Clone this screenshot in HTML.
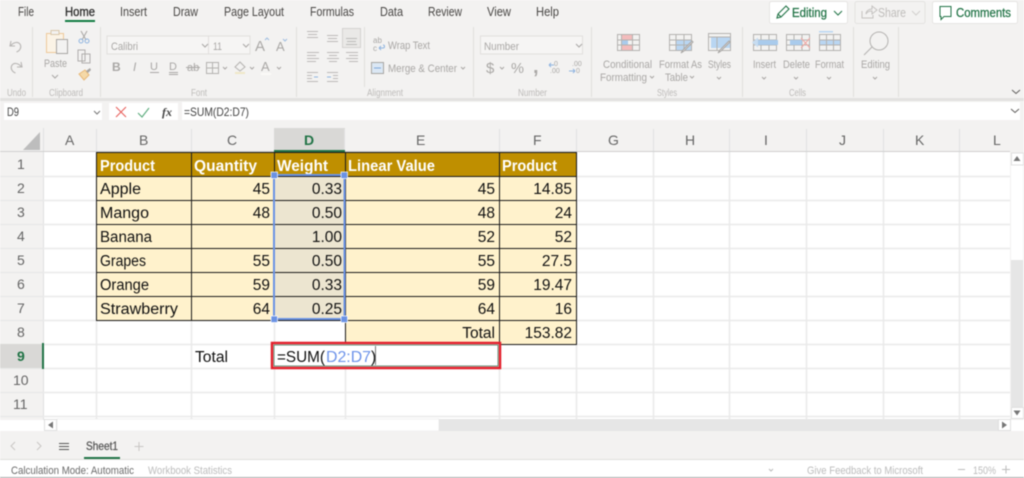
<!DOCTYPE html>
<html><head><meta charset="utf-8"><title>Excel</title>
<style>
html,body{margin:0;padding:0;background:#fff;width:1024px;height:478px;overflow:hidden}
svg{display:block;filter:blur(.45px)}
text{font-family:"Liberation Sans",sans-serif}
.tab{font-size:12.5px;fill:#484644}
.rb{font-size:11px;fill:#a9a7a5}
.gl{font-size:10px;fill:#bdbbb9}
.hd{font-size:14px;fill:#666}
.c{font-size:15.5px;fill:#111}
.w{font-size:15.5px;fill:#fff;font-weight:bold}
.gr{stroke:#eaeaea;stroke-width:1.5;fill:none}
.bk{stroke:#1c1c1c;stroke-width:1;fill:none}
.ic{stroke:#b4b2b0;stroke-width:1;fill:none}
.al{stroke:#bcbab8;stroke-width:1;fill:none}
.sep{stroke:#e1dfdd;stroke-width:1}
.chv{stroke:#a9a7a5;stroke-width:1;fill:none}
</style></head><body>
<svg width="1024" height="478" viewBox="0 0 1024 478" xmlns="http://www.w3.org/2000/svg" shape-rendering="geometricPrecision">
<rect width="1024" height="478" fill="#fff"/>
<rect width="1024" height="128" fill="#f3f2f1"/>
<rect y="98" width="1024" height="3" fill="#e3e2e0"/>

<!-- tabs -->
<text class="tab" x="18" y="16" textLength="16" lengthAdjust="spacingAndGlyphs">File</text>
<text class="tab" x="65" y="16" textLength="30" lengthAdjust="spacingAndGlyphs" style="fill:#2b2b2b;stroke:#2b2b2b;stroke-width:.3">Home</text>
<rect x="65" y="20" width="30" height="2" fill="#107c41"/>
<text class="tab" x="120" y="16" textLength="27" lengthAdjust="spacingAndGlyphs">Insert</text>
<text class="tab" x="173" y="16" textLength="25" lengthAdjust="spacingAndGlyphs">Draw</text>
<text class="tab" x="224" y="16" textLength="60" lengthAdjust="spacingAndGlyphs">Page Layout</text>
<text class="tab" x="310" y="16" textLength="44" lengthAdjust="spacingAndGlyphs">Formulas</text>
<text class="tab" x="380" y="16" textLength="23" lengthAdjust="spacingAndGlyphs">Data</text>
<text class="tab" x="428" y="16" textLength="34" lengthAdjust="spacingAndGlyphs">Review</text>
<text class="tab" x="487" y="16" textLength="24" lengthAdjust="spacingAndGlyphs">View</text>
<text class="tab" x="536" y="16" textLength="23" lengthAdjust="spacingAndGlyphs">Help</text>

<!-- top right buttons -->
<rect x="769.5" y="1.5" width="78" height="22" rx="2" fill="#fff" stroke="#e6e5e3"/>
<path d="M777 18l1-4 8-8 3 3-8 8zM778 14l3 3" fill="none" stroke="#217346" stroke-width="1.1"/>
<text x="792" y="17" font-size="12.5" fill="#217346" stroke="#217346" stroke-width=".25" textLength="35" lengthAdjust="spacingAndGlyphs">Editing</text>
<path d="M834 11l4 4 4-4" fill="none" stroke="#217346"/>
<rect x="855" y="1.5" width="70" height="22" rx="2" fill="#f3f2f1" stroke="#e3e2e0"/>
<path d="M862 11v7h11v-3M866 14c0-3 3-5 6-5V6l5 4-5 4v-3c-3 0-5 1-6 3z" fill="none" stroke="#c4c2c0"/>
<text x="878" y="17" font-size="12.5" fill="#bfbdbb" textLength="28" lengthAdjust="spacingAndGlyphs">Share</text>
<path d="M912 11l4 4 4-4" fill="none" stroke="#d2d0ce"/>
<rect x="932.5" y="1.5" width="85" height="22" rx="2" fill="#fff" stroke="#e6e5e3"/>
<path d="M940 6.500h11v10h-7l-3 3v-3h-1z" fill="none" stroke="#217346"/>
<text x="956" y="17" font-size="12.5" fill="#217346" stroke="#217346" stroke-width=".25" textLength="55" lengthAdjust="spacingAndGlyphs">Comments</text>

<!-- group separators -->
<path class="sep" d="M32.500 27v70M100.500 27v70M296.500 27v70M364.500 27v60M473.500 27v70M591.500 27v70M742.500 27v70M853.500 27v70M898.500 27v70"/>

<!-- undo/redo -->
<path d="M11 41l-1 5 5 0M10.500 46c3-4 8-5 10-1 1 3-1 6-4 7" fill="none" stroke="#b8b6b4" stroke-width="1.100"/>
<path d="M21 62l1 5-5 0M21.500 67c-3-4-8-5-10-1-1 3 1 6 4 7" fill="none" stroke="#b8b6b4" stroke-width="1.100"/>
<text class="gl" x="7" y="96" textLength="19" lengthAdjust="spacingAndGlyphs">Undo</text>

<!-- clipboard -->
<rect x="46.500" y="33.500" width="17" height="19" fill="#fbf3e6" stroke="#eec99a"/>
<rect x="51" y="30.500" width="8" height="4" fill="#f3f2f1" stroke="#d9c7ac"/>
<rect x="56.500" y="39.500" width="11" height="14" fill="#f3f2f1" stroke="#a8a6a4"/>
<text class="rb" x="44" y="67" textLength="23" lengthAdjust="spacingAndGlyphs">Paste</text>
<path class="chv" d="M52 75l3 3 3-3"/>
<path d="M81 31l5 9M87 31l-5 9" stroke="#a8a6a4" fill="none"/>
<circle cx="81" cy="41" r="2" fill="none" stroke="#8fb4e0"/><circle cx="87" cy="41" r="2" fill="none" stroke="#8fb4e0"/>
<path d="M78 50h7v11h-7zM82 54h8v9h-8z" fill="#f3f2f1" stroke="#b0aeac"/>
<path d="M79 74l6-4 4 5-5 5z" fill="#f5d9a8" stroke="#e8b878"/><path d="M86 71l4-3 1 2-3 3z" fill="#a8a6a4"/>
<text class="gl" x="49" y="96" textLength="34" lengthAdjust="spacingAndGlyphs">Clipboard</text>

<!-- font -->
<rect x="107" y="36" width="143" height="18" fill="#f6f5f4" stroke="#e1dfdd"/>
<path class="sep" d="M208.500 36v18"/>
<text class="rb" x="111" y="50" textLength="27" lengthAdjust="spacingAndGlyphs">Calibri</text>
<path class="chv" d="M202 44l3 3 3-3M243 44l3 3 3-3"/>
<text class="rb" x="213" y="50" textLength="9" lengthAdjust="spacingAndGlyphs">11</text>
<text x="255" y="51" font-size="15" fill="#aaa8a6">A</text><path d="M265 40l2-2 2 2" fill="none" stroke="#9fbde0"/>
<text x="276" y="51" font-size="13" fill="#aaa8a6">A</text><path d="M283 39l2 2 2-2" fill="none" stroke="#9fbde0"/>
<text x="112" y="71" font-size="12" font-weight="bold" fill="#a9a7a5">B</text>
<text x="133" y="71" font-size="12" font-style="italic" fill="#a9a7a5">I</text>
<text x="150" y="70" font-size="11" fill="#a9a7a5">U</text><path class="chv" d="M150 72.500h9"/>
<text x="169" y="70" font-size="11" fill="#a9a7a5">D</text><path class="chv" d="M169 72.500h9M169 74.500h9"/>
<text x="187" y="71" font-size="11" fill="#a9a7a5">ab</text><path class="chv" d="M186 67.500h14"/>
<path class="ic" d="M206.500 62.500h12v11h-12zM212.500 62.500v11M206.500 68h12"/>
<path class="chv" d="M223 67l2 2 2-2M250 67l2 2 2-2M277 67l2 2 2-2"/>
<path d="M235 67l5-5 5 5-5 4z" fill="none" stroke="#b4b2b0"/><rect x="235" y="72" width="10" height="2" fill="#f0e7c8"/>
<text x="261" y="71" font-size="13" fill="#aaa8a6">A</text><rect x="261" y="73" width="10" height="2" fill="#fbfaf8"/>
<text class="gl" x="191" y="96" textLength="16" lengthAdjust="spacingAndGlyphs">Font</text>

<!-- alignment -->
<rect x="342.500" y="28.500" width="18" height="19" fill="#eae9e7" stroke="#d4d2d0"/>
<path class="al" d="M307 31.500h11M308 34.500h9M307 37.500h11 M327 35.500h11M328 38.500h9M327 41.500h11 M346 38.500h11M347 41.500h9M346 44.500h11"/>
<path class="al" d="M307 52.500h12M307 55.500h9M307 58.500h12M307 61.500h9 M327 52.500h12M329 55.500h8M327 58.500h12M329 61.500h8 M346 52.500h12M349 55.500h9M346 58.500h12M349 61.500h9"/>
<path class="al" d="M307 72.500h11M307 75.500h5M307 78.500h5M307 81.500h11 M327 72.500h11M333 75.500h5M333 78.500h5M327 81.500h11"/>
<path d="M314 77h4M327 77h4" stroke="#8fb4e0" fill="none"/>
<text x="373" y="43" font-size="8" fill="#aaa8a6">ab</text><text x="373" y="51" font-size="8" fill="#aaa8a6">c</text>
<path d="M379 48h4c2 0 2-3 0-3M379 48l2-2M379 48l2 2" fill="none" stroke="#8fb4e0"/>
<text class="rb" x="388" y="49" textLength="42" lengthAdjust="spacingAndGlyphs">Wrap Text</text>
<rect x="371.500" y="62.500" width="12" height="11" fill="#dbe7f4" stroke="#a8a6a4"/>
<path d="M374 68h7" stroke="#7fa8d8" fill="none"/>
<text class="rb" x="388" y="72" textLength="69" lengthAdjust="spacingAndGlyphs">Merge &amp; Center</text>
<path class="chv" d="M461 67l2 2 2-2"/>
<text class="gl" x="367" y="96" textLength="36" lengthAdjust="spacingAndGlyphs">Alignment</text>

<!-- number -->
<rect x="480.500" y="36" width="102" height="18" fill="#f6f5f4" stroke="#e1dfdd"/>
<text class="rb" x="484" y="50" textLength="35" lengthAdjust="spacingAndGlyphs">Number</text>
<path class="chv" d="M576 44l3 3 3-3"/>
<text x="486" y="73" font-size="15" fill="#aaa8a6">$</text>
<path class="chv" d="M500 67l2 2 2-2"/>
<text x="511" y="73" font-size="15" fill="#aaa8a6" textLength="13" lengthAdjust="spacingAndGlyphs">%</text>
<text x="533" y="73" font-size="20" font-weight="bold" fill="#aaa8a6">,</text>
<text x="554" y="66" font-size="7" fill="#aaa8a6">0</text><text x="550" y="73" font-size="7" fill="#aaa8a6">.00</text>
<path d="M549 65h5M549 65l2-2M549 65l2 2" fill="none" stroke="#8fb4e0"/>
<text x="572" y="66" font-size="7" fill="#aaa8a6">.00</text><text x="576" y="73" font-size="7" fill="#aaa8a6">0</text>
<path d="M569 71h6M575 71l-2-2M575 71l-2 2" fill="none" stroke="#8fb4e0"/>
<text class="gl" x="518" y="96" textLength="29" lengthAdjust="spacingAndGlyphs">Number</text>

<!-- styles -->
<rect x="617" y="34" width="22" height="17" fill="#f3f2f1"/>
<rect x="621" y="34" width="11" height="6" fill="#f3bcbc"/><rect x="621" y="40" width="7" height="5" fill="#a9cbec"/><rect x="621" y="45" width="11" height="6" fill="#f3bcbc"/>
<path class="ic" d="M617.500 34.500h22v16h-22zM617.500 40h22M617.500 45h22M621.500 34.500v16M632.500 34.500v16"/>
<text class="rb" x="603" y="68" textLength="49" lengthAdjust="spacingAndGlyphs">Conditional</text>
<text class="rb" x="600" y="81" textLength="47" lengthAdjust="spacingAndGlyphs">Formatting</text>
<path class="chv" d="M650 76l2 2 2-2"/>
<rect x="676" y="40" width="16" height="11" fill="#b9d6f2"/>
<path class="ic" d="M669.500 34.500h22v16h-22zM669.500 40h22M669.500 45h22M676 34.500v16M684 34.500v16"/>
<path d="M681 53l2-3 9-9 1 1-9 9z" fill="#f3f2f1" stroke="#a8a6a4"/>
<text class="rb" x="659" y="68" textLength="43" lengthAdjust="spacingAndGlyphs">Format As</text>
<text class="rb" x="665" y="81" textLength="23" lengthAdjust="spacingAndGlyphs">Table</text>
<path class="chv" d="M690 76l2 2 2-2"/>
<rect x="709" y="34" width="22" height="17" fill="#f3f2f1"/><rect x="711" y="37" width="19" height="11" fill="#b9d6f2"/>
<path class="ic" d="M708.500 33.500h22v17h-22zM708.500 37h22M717 37v13"/>
<path d="M718 53l2-3 9-9 1 1-9 9z" fill="#f3f2f1" stroke="#a8a6a4"/>
<text class="rb" x="708" y="68" textLength="23" lengthAdjust="spacingAndGlyphs">Styles</text>
<path class="chv" d="M717 77l2 2 2-2"/>
<text class="gl" x="657" y="96" textLength="20" lengthAdjust="spacingAndGlyphs">Styles</text>

<!-- cells -->
<path class="ic" d="M753.500 34.500h23v16h-23zM753.500 40h23M753.500 45h23M761 34.500v16M769 34.500v16"/>
<rect x="757" y="40" width="21" height="5" fill="#a9cbec"/><path d="M752 42.500l6-5v10z" fill="#c7dcf0"/>
<path class="ic" d="M786.500 34.500h23v16h-23zM786.500 40h23M786.500 45h23M794 34.500v16M802 34.500v16"/>
<rect x="790" y="40" width="12" height="5" fill="#a9cbec"/><path d="M801 38l9 10M810 38l-9 10" stroke="#f0a8a4" stroke-width="1" fill="none"/>
<rect x="819" y="31" width="14" height="1.500" fill="#b9d6f2"/>
<rect x="819" y="40" width="21" height="5" fill="#b9d6f2"/>
<path class="ic" d="M819.500 34.500h21v16h-21zM819.500 40h21M819.500 45h21M826.500 34.500v16M833.500 34.500v16"/>
<text class="rb" x="753" y="68" textLength="23" lengthAdjust="spacingAndGlyphs">Insert</text>
<text class="rb" x="783" y="68" textLength="27" lengthAdjust="spacingAndGlyphs">Delete</text>
<text class="rb" x="815" y="68" textLength="29" lengthAdjust="spacingAndGlyphs">Format</text>
<path class="chv" d="M762 77l2 2 2-2M794 77l2 2 2-2M827 77l2 2 2-2"/>
<text class="gl" x="789" y="96" textLength="17" lengthAdjust="spacingAndGlyphs">Cells</text>

<!-- editing -->
<circle cx="879" cy="41" r="9" fill="none" stroke="#b4b2b0"/>
<path d="M872 47l-8 8" stroke="#b4b2b0" fill="none"/>
<text class="rb" x="861" y="68" textLength="29" lengthAdjust="spacingAndGlyphs">Editing</text>
<path class="chv" d="M873 77l2 2 2-2"/>
<path d="M1012 90l4 3.500 4-3.500" fill="none" stroke="#605e5c"/>

<!-- formula bar -->
<rect x="4" y="103" width="98" height="17" fill="#fff"/>
<rect x="109" y="103" width="69" height="17" fill="#fff"/>
<rect x="182" y="102" width="838" height="18" fill="#fff"/>
<text x="7" y="116" font-size="11.500" fill="#444" textLength="12" lengthAdjust="spacingAndGlyphs">D9</text>
<path d="M94 111l3 3 3-3" fill="none" stroke="#777"/>
<path d="M116 107l10 10M126 107l-10 10" stroke="#e8615d" stroke-width="1.100" fill="none"/>
<path d="M138 113l4 4 7-9" stroke="#5cab7d" stroke-width="1.100" fill="none"/>
<text x="162" y="116" font-size="12" font-style="italic" font-weight="bold" fill="#444" style="font-family:'Liberation Serif',serif">fx</text>
<text x="184" y="116" font-size="12" fill="#444" textLength="65" lengthAdjust="spacingAndGlyphs">=SUM(D2:D7)</text>
<path d="M1011 109l4 3.500 4-3.500" fill="none" stroke="#605e5c"/>

<!-- column headers -->
<rect y="120" width="1024" height="8" fill="#f3f2f1"/>
<rect y="128" width="44" height="292" fill="#f3f2f1"/>
<rect y="128" width="1010" height="24" fill="#f3f2f1"/>
<path d="M40 132v18H23z" fill="#bdbdbd"/>
<rect x="274" y="128" width="71" height="24" fill="#d9d8d6"/>
<path d="M43.500 128v292M96.500 129v22M191.500 129v22M344.500 129v22M499.500 129v22M576.500 129v22M653.500 129v22M729.500 129v22M806.500 129v22M883.500 129v22M959.500 129v22" stroke="#e1e1e1" fill="none"/>
<rect x="0" y="151" width="1010" height="1" fill="#d0d0d0"/>
<text class="hd" x="65" y="145">A</text>
<text class="hd" x="139" y="145">B</text>
<text class="hd" x="227" y="145">C</text>
<text class="hd" x="304" y="145" style="font-weight:bold;fill:#217346">D</text>
<text class="hd" x="416" y="145">E</text>
<text class="hd" x="533" y="145">F</text>
<text class="hd" x="608" y="145">G</text>
<text class="hd" x="685" y="145">H</text>
<text class="hd" x="764" y="145">I</text>
<text class="hd" x="839" y="145">J</text>
<text class="hd" x="915" y="145">K</text>
<text class="hd" x="993" y="145">L</text>

<!-- grid -->
<path class="gr" d="M44 176.500h966M44 200.500h966M44 224.500h966M44 248.500h966M44 272.500h966M44 296.500h966M44 320.500h966M44 344.500h966M44 368.500h966M44 392.500h966M44 416.500h966"/>
<path class="gr" d="M96.500 152v267M191.500 152v267M274.500 152v267M345.500 152v267M499.500 152v267M576.500 152v267M653.500 152v267M729.500 152v267M806.500 152v267M883.500 152v267M959.500 152v267"/>
<path d="M0 176.500h44M0 200.500h44M0 224.500h44M0 248.500h44M0 272.500h44M0 296.500h44M0 320.500h44M0 344.500h44M0 368.500h44M0 392.500h44M0 416.500h44" stroke="#e9e9e9" stroke-width="1.500" fill="none"/>

<!-- row headers -->
<rect x="0" y="344" width="42" height="24" fill="#d9d8d6"/>
<rect x="42" y="343" width="2" height="26" fill="#217346"/>
<text class="hd" x="17" y="169">1</text>
<text class="hd" x="17" y="193">2</text>
<text class="hd" x="17" y="217">3</text>
<text class="hd" x="17" y="241">4</text>
<text class="hd" x="17" y="265">5</text>
<text class="hd" x="17" y="289">6</text>
<text class="hd" x="17" y="313">7</text>
<text class="hd" x="17" y="337">8</text>
<text class="hd" x="17" y="361" style="font-weight:bold;fill:#217346">9</text>
<text class="hd" x="13" y="385">10</text>
<text class="hd" x="13" y="409">11</text>

<!-- table fills -->
<rect x="96" y="152" width="480" height="24" fill="#bf8f00"/>
<rect x="96" y="176" width="178" height="144" fill="#fff2cc"/>
<rect x="274" y="176" width="71" height="144" fill="#ece5d0"/>
<rect x="345" y="176" width="231" height="168" fill="#fff2cc"/>
<path class="bk" d="M96.500 152.500h480M96.500 176.500h480M96.500 200.500h480M96.500 224.500h480M96.500 248.500h480M96.500 272.500h480M96.500 296.500h480M96.500 320.500h480M345 344.500h232"/>
<path class="bk" d="M96.500 152v169M191.500 152v169M274.500 152v169M345.500 152v193M499.500 152v193M576.500 152v193"/>
<rect x="274" y="150" width="71" height="2" fill="#217346"/>

<!-- table text -->
<text class="w" x="100" y="171" textLength="55" lengthAdjust="spacingAndGlyphs">Product</text>
<text class="w" x="194" y="171" textLength="63" lengthAdjust="spacingAndGlyphs">Quantity</text>
<text class="w" x="277" y="171" textLength="51" lengthAdjust="spacingAndGlyphs">Weight</text>
<text class="w" x="348" y="171" textLength="87" lengthAdjust="spacingAndGlyphs">Linear Value</text>
<text class="w" x="502" y="171" textLength="55" lengthAdjust="spacingAndGlyphs">Product</text>

<text class="c" x="100" y="194" textLength="41" lengthAdjust="spacingAndGlyphs">Apple</text>
<text class="c" x="100" y="218" textLength="49" lengthAdjust="spacingAndGlyphs">Mango</text>
<text class="c" x="100" y="242" textLength="52" lengthAdjust="spacingAndGlyphs">Banana</text>
<text class="c" x="100" y="266" textLength="46" lengthAdjust="spacingAndGlyphs">Grapes</text>
<text class="c" x="100" y="290" textLength="49" lengthAdjust="spacingAndGlyphs">Orange</text>
<text class="c" x="100" y="314" textLength="78" lengthAdjust="spacingAndGlyphs">Strawberry</text>

<g text-anchor="end">
<text class="c" x="270" y="194">45</text>
<text class="c" x="270" y="218">48</text>
<text class="c" x="270" y="266">55</text>
<text class="c" x="270" y="290">59</text>
<text class="c" x="270" y="314">64</text>
<text class="c" x="342" y="194">0.33</text>
<text class="c" x="342" y="218">0.50</text>
<text class="c" x="342" y="242">1.00</text>
<text class="c" x="342" y="266">0.50</text>
<text class="c" x="342" y="290">0.33</text>
<text class="c" x="342" y="314">0.25</text>
<text class="c" x="495" y="194">45</text>
<text class="c" x="495" y="218">48</text>
<text class="c" x="495" y="242">52</text>
<text class="c" x="495" y="266">55</text>
<text class="c" x="495" y="290">59</text>
<text class="c" x="495" y="314">64</text>
<text class="c" x="495" y="338">Total</text>
<text class="c" x="572" y="194">14.85</text>
<text class="c" x="572" y="218">24</text>
<text class="c" x="572" y="242">52</text>
<text class="c" x="572" y="266">27.5</text>
<text class="c" x="572" y="290">19.47</text>
<text class="c" x="572" y="314">16</text>
<text class="c" x="572" y="338">153.82</text>
</g>
<text class="c" x="195" y="362" textLength="33" lengthAdjust="spacingAndGlyphs">Total</text>

<!-- selection -->
<rect x="274" y="175" width="70.500" height="144" fill="none" stroke="#6a92e4" stroke-width="2"/>
<g fill="#6a92e4" stroke="#fff" stroke-width=".7">
<rect x="271" y="172" width="6.500" height="6.500"/><rect x="341" y="172" width="6.500" height="6.500"/>
<rect x="271" y="316" width="6.500" height="6.500"/><rect x="341" y="316" width="6.500" height="6.500"/>
</g>

<!-- active cell -->
<rect x="272" y="343" width="228" height="25" fill="#fff" stroke="#e3202c" stroke-width="2.500"/>
<rect x="274" y="345" width="224" height="21" fill="#fff" stroke="#3f7a5a" stroke-width=".8"/>
<text class="c" x="277" y="362" textLength="48" lengthAdjust="spacingAndGlyphs">=SUM(</text>
<text class="c" x="326" y="362" textLength="45" lengthAdjust="spacingAndGlyphs" style="fill:#6d93ea">D2:D7</text>
<text class="c" x="371" y="362">)</text>
<rect x="375" y="346" width="1" height="19" fill="#777"/>

<!-- vertical scrollbar -->
<rect x="1010" y="128" width="14" height="292" fill="#f3f2f1"/>
<rect x="1011" y="153" width="12" height="254" fill="#fff"/>
<rect x="1011" y="260" width="12" height="147" fill="#e6e6e6"/>
<rect x="1011.500" y="153" width="12" height="12" fill="#fff" stroke="#e0e0e0"/>
<path d="M1017 156l3.500 5h-7z" fill="#777"/>
<rect x="1011.500" y="407.500" width="12" height="11" fill="#fff" stroke="#e0e0e0"/>
<path d="M1017 415.500l3.500-5h-7z" fill="#777"/>

<!-- horizontal scrollbar -->
<rect x="44" y="419" width="966" height="12" fill="#e6e6e6"/>
<rect x="57" y="419" width="382" height="12" fill="#fff" stroke="#e4e4e4" stroke-width=".6"/>
<rect x="44.500" y="419.500" width="12" height="11" fill="#fff" stroke="#e0e0e0"/>
<path d="M48 425l5-3.500v7z" fill="#777"/>
<rect x="998.500" y="419.500" width="12" height="11" fill="#fff" stroke="#e0e0e0"/>
<path d="M1007 425l-5-3.500v7z" fill="#777"/>

<!-- sheet bar -->
<rect y="431" width="1024" height="28" fill="#f3f2f1"/>
<path d="M15 442l-4 4 4 4M37 442l4 4-4 4" fill="none" stroke="#c8c6c4"/>
<path d="M59 443.500h10M59 446.500h10M59 449.500h10" stroke="#555" fill="none"/>
<text x="86" y="450" font-size="12" fill="#555" stroke="#555" stroke-width=".25" textLength="32" lengthAdjust="spacingAndGlyphs">Sheet1</text>
<rect x="84" y="457" width="36" height="2" fill="#217346"/>
<path d="M139 442v9M134.500 446.500h9" stroke="#c8c6c4" fill="none"/>

<!-- status bar -->
<rect y="459" width="1024" height="1" fill="#e1dfdd"/>
<rect y="460" width="1024" height="17" fill="#fff"/>
<rect y="477" width="1024" height="1" fill="#a8a8a8"/>
<text x="11" y="474" font-size="11" fill="#6a6a6a" textLength="123" lengthAdjust="spacingAndGlyphs">Calculation Mode: Automatic</text>
<text x="148" y="474" font-size="11" fill="#bcbcbc" textLength="84" lengthAdjust="spacingAndGlyphs">Workbook Statistics</text>
<path d="M769 469l2 2 2-2" fill="none" stroke="#bbb"/>
<text x="807" y="474" font-size="11" fill="#bcbcbc" textLength="116" lengthAdjust="spacingAndGlyphs">Give Feedback to Microsoft</text>
<path d="M958 469.500h7M1002 469.500h8M1006 465.500v8" stroke="#bcbcbc" fill="none"/>
<text x="973" y="474" font-size="11" fill="#bcbcbc" textLength="23" lengthAdjust="spacingAndGlyphs">150%</text>
</svg>
</body></html>
